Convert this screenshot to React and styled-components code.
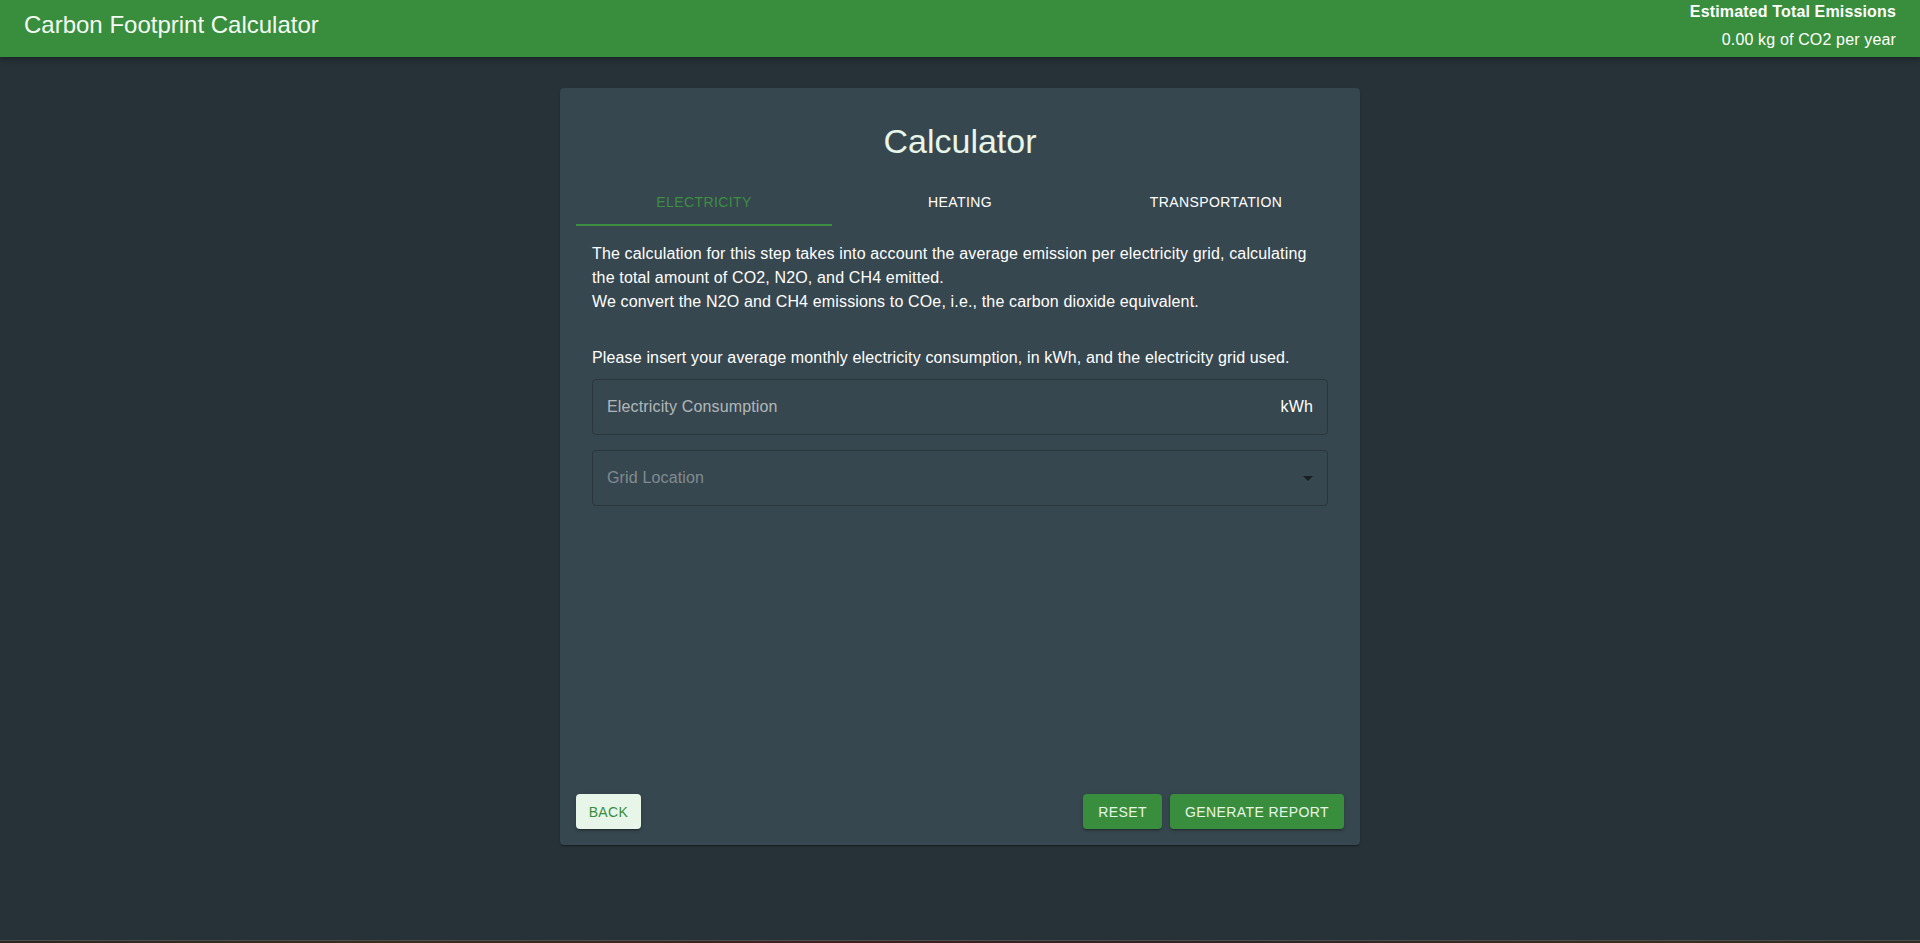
import React, { useState } from 'react'
import styled, { createGlobalStyle } from 'styled-components'

const GlobalStyle = createGlobalStyle`
  html, body {
    margin: 0;
    padding: 0;
    background: #263238;
    font-family: "Liberation Sans", Arial, sans-serif;
    color: #fff;
  }
  * { box-sizing: border-box; }
`

const tabs = ['Electricity', 'Heating', 'Transportation']

export default function App() {
  const [active, setActive] = useState(0)
  const [kwh, setKwh] = useState('')

  return (
    <>
      <GlobalStyle />
      <Header>
        <AppTitle>Carbon Footprint Calculator</AppTitle>
        <Totals>
          <TotalsLabel>Estimated Total Emissions</TotalsLabel>
          <TotalsValue>0.00 kg of CO2 per year</TotalsValue>
        </Totals>
      </Header>

      <Main>
        <Card>
          <CardTitle>Calculator</CardTitle>

          <TabBar>
            {tabs.map((t, i) => (
              <Tab key={t} $active={i === active} onClick={() => setActive(i)}>
                {t}
              </Tab>
            ))}
          </TabBar>

          <Panel>
            <Text>
              The calculation for this step takes into account the average emission per electricity grid, calculating
              the total amount of CO2, N2O, and CH4 emitted.
              <br />
              We convert the N2O and CH4 emissions to COe, i.e., the carbon dioxide equivalent.
            </Text>
            <Prompt>Please insert your average monthly electricity consumption, in kWh, and the electricity grid used.</Prompt>

            <Field>
              <FieldInput
                placeholder="Electricity Consumption"
                value={kwh}
                onChange={e => setKwh(e.target.value)}
              />
              <Unit>kWh</Unit>
            </Field>

            <Field>
              <SelectLabel>Grid Location</SelectLabel>
              <Arrow viewBox="0 0 24 24">
                <path d="M7 10l5 5 5-5z" />
              </Arrow>
            </Field>
          </Panel>

          <Actions>
            <Button $light>Back</Button>
            <ActionGroup>
              <Button>Reset</Button>
              <Button>Generate Report</Button>
            </ActionGroup>
          </Actions>
        </Card>
      </Main>

      <Footer />
    </>
  )
}

const Header = styled.header`
  height: 57px;
  background: #388e3c;
  display: flex;
  justify-content: space-between;
  align-items: flex-start;
  padding: 0 24px;
  box-shadow: 0 2px 4px -1px rgba(0,0,0,0.2), 0 4px 5px 0 rgba(0,0,0,0.14);
`

const AppTitle = styled.h1`
  margin: 0;
  padding-top: 9px;
  font-size: 24px;
  font-weight: 400;
  line-height: 32px;
  color: #f4faf4;
`

const Totals = styled.div`
  display: flex;
  flex-direction: column;
  align-items: flex-end;
  letter-spacing: 0.15px;
`

const TotalsLabel = styled.div`
  font-size: 16px;
  font-weight: 700;
  line-height: 24px;
`

const TotalsValue = styled.div`
  font-size: 16px;
  line-height: 32px;
`

const Main = styled.main`
  display: flex;
  justify-content: center;
  padding: 31px 0 95px;
`

const Card = styled.section`
  width: 800px;
  height: 757px;
  background: #37474f;
  border-radius: 4px;
  padding: 16px;
  display: flex;
  flex-direction: column;
  box-shadow: 0 2px 1px -1px rgba(0,0,0,0.2), 0 1px 1px 0 rgba(0,0,0,0.14), 0 1px 3px 0 rgba(0,0,0,0.12);
`

const CardTitle = styled.h2`
  margin: 16px 0 16px;
  text-align: center;
  font-size: 34px;
  font-weight: 400;
  line-height: 42px;
  color: #e8f5e9;
`

const TabBar = styled.nav`
  display: grid;
  grid-template-columns: repeat(3, 1fr);
`

const Tab = styled.button`
  height: 48px;
  border: 0;
  background: none;
  font-family: inherit;
  font-size: 14px;
  letter-spacing: 0.4px;
  text-transform: uppercase;
  color: ${p => (p.$active ? '#3c8f40' : '#fff')};
  border-bottom: 2px solid ${p => (p.$active ? '#3c8f40' : 'transparent')};
  padding: 2px 16px 0;
  cursor: pointer;
`

const Panel = styled.div`
  padding: 16px;
  display: flex;
  flex-direction: column;
`

const Text = styled.p`
  margin: 0 0 32px;
  font-size: 16px;
  line-height: 24px;
  letter-spacing: 0.15px;
`

const Prompt = styled(Text)`
  margin: 0 0 9px;
`

const Field = styled.div`
  position: relative;
  height: 56px;
  border: 1px solid rgba(0,0,0,0.23);
  border-radius: 4px;
  display: flex;
  align-items: center;
  padding: 0 14px;
  margin-bottom: 15px;
  letter-spacing: 0.15px;
`

const FieldInput = styled.input`
  flex: 1;
  border: 0;
  outline: none;
  background: transparent;
  font-family: inherit;
  font-size: 16px;
  letter-spacing: 0.15px;
  color: #fff;
  padding: 0;
  &::placeholder {
    color: rgba(255,255,255,0.62);
  }
`

const Unit = styled.span`
  font-size: 16px;
  color: #fff;
`

const SelectLabel = styled.span`
  flex: 1;
  font-size: 16px;
  color: rgba(255,255,255,0.38);
`

const Arrow = styled.svg`
  width: 24px;
  height: 24px;
  fill: rgba(0,0,0,0.54);
  margin-right: -7px;
`

const Actions = styled.div`
  margin-top: auto;
  display: flex;
  justify-content: space-between;
  align-items: center;
`

const ActionGroup = styled.div`
  display: flex;
  gap: 8px;
`

const Button = styled.button`
  height: 35px;
  min-width: 65px;
  padding: ${p => (p.$light ? '0 8px' : '0 15px')};
  border: 0;
  border-radius: 4px;
  font-family: inherit;
  font-size: 14px;
  letter-spacing: 0.4px;
  text-transform: uppercase;
  background: ${p => (p.$light ? '#e8f5e9' : '#388e3c')};
  color: ${p => (p.$light ? '#388e3c' : '#e8f5e9')};
  box-shadow: 0 3px 1px -2px rgba(0,0,0,0.2), 0 2px 2px 0 rgba(0,0,0,0.14), 0 1px 5px 0 rgba(0,0,0,0.12);
  cursor: pointer;
`

const Footer = styled.footer`
  height: 60px;
  border-top: 1px solid #4b4f50;
  background: linear-gradient(90deg, #2a2721, #3a2d1c 20%, #3d1f1f 45%, #2f2428 65%, #3a2e1c 85%, #2c2a22);
`
